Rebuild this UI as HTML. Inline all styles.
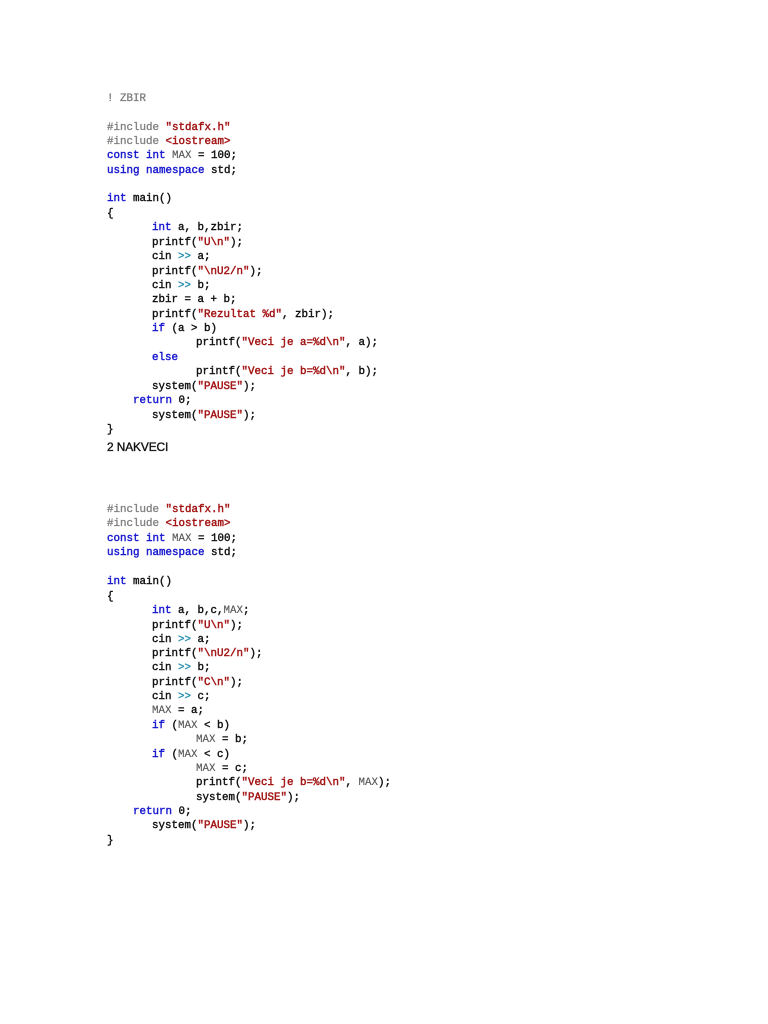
<!DOCTYPE html>
<html>
<head>
<meta charset="utf-8">
<style>
html,body{margin:0;padding:0;background:#fff;}
#p{position:relative;width:768px;height:1024px;overflow:hidden;background:#fff;filter:blur(0.35px);}
pre{position:absolute;margin:0;margin-top:1px;line-height:14px;font-family:"Liberation Mono",monospace;font-size:10.83px;color:#111;-webkit-text-stroke:0.4px #111;white-space:pre;}
.a{left:107px}.b{left:152px}.c{left:133px}.d{left:196px}
i{font-style:normal}
.k{color:#1a1ad0;-webkit-text-stroke:0.45px #1a1ad0}
.s{color:#a31515;-webkit-text-stroke:0.45px #a31515}
.g{color:#808080;-webkit-text-stroke:0.35px #808080}
.v{color:#555;-webkit-text-stroke:0.1px #555}
.t{color:#2b91af;-webkit-text-stroke:0.4px #2b91af}
#h{position:absolute;left:107px;top:439px;font:11.9px/16px "Liberation Sans",sans-serif;color:#111;-webkit-text-stroke:0.35px #111;letter-spacing:-0.1px}
</style>
</head>
<body>
<div id="p">
<pre class="a" style="top:91px"><i class="g">! ZBIR</i></pre>
<pre class="a" style="top:120px"><i class="g">#include</i> <i class="s">"stdafx.h"</i></pre>
<pre class="a" style="top:134px"><i class="g">#include</i> <i class="s">&lt;iostream&gt;</i></pre>
<pre class="a" style="top:148px"><i class="k">const</i> <i class="k">int</i> <i class="v">MAX</i> = 100;</pre>
<pre class="a" style="top:163px"><i class="k">using</i> <i class="k">namespace</i> std;</pre>
<pre class="a" style="top:191px"><i class="k">int</i> main()</pre>
<pre class="a" style="top:206px">{</pre>
<pre class="b" style="top:220px"><i class="k">int</i> a, b,zbir;</pre>
<pre class="b" style="top:235px">printf(<i class="s">"U\n"</i>);</pre>
<pre class="b" style="top:249px">cin <i class="t">&gt;&gt;</i> a;</pre>
<pre class="b" style="top:264px">printf(<i class="s">"\nU2/n"</i>);</pre>
<pre class="b" style="top:278px">cin <i class="t">&gt;&gt;</i> b;</pre>
<pre class="b" style="top:292px">zbir = a + b;</pre>
<pre class="b" style="top:307px">printf(<i class="s">"Rezultat %d"</i>, zbir);</pre>
<pre class="b" style="top:321px"><i class="k">if</i> (a &gt; b)</pre>
<pre class="d" style="top:335px">printf(<i class="s">"Veci je a=%d\n"</i>, a);</pre>
<pre class="b" style="top:350px"><i class="k">else</i></pre>
<pre class="d" style="top:364px">printf(<i class="s">"Veci je b=%d\n"</i>, b);</pre>
<pre class="b" style="top:379px">system(<i class="s">"PAUSE"</i>);</pre>
<pre class="c" style="top:393px"><i class="k">return</i> 0;</pre>
<pre class="b" style="top:408px">system(<i class="s">"PAUSE"</i>);</pre>
<pre class="a" style="top:422px">}</pre>
<div id="h">2 NAKVECI</div>
<pre class="a" style="top:502px"><i class="g">#include</i> <i class="s">"stdafx.h"</i></pre>
<pre class="a" style="top:516px"><i class="g">#include</i> <i class="s">&lt;iostream&gt;</i></pre>
<pre class="a" style="top:531px"><i class="k">const</i> <i class="k">int</i> <i class="v">MAX</i> = 100;</pre>
<pre class="a" style="top:545px"><i class="k">using</i> <i class="k">namespace</i> std;</pre>
<pre class="a" style="top:574px"><i class="k">int</i> main()</pre>
<pre class="a" style="top:589px">{</pre>
<pre class="b" style="top:603px"><i class="k">int</i> a, b,c,<i class="v">MAX</i>;</pre>
<pre class="b" style="top:618px">printf(<i class="s">"U\n"</i>);</pre>
<pre class="b" style="top:632px">cin <i class="t">&gt;&gt;</i> a;</pre>
<pre class="b" style="top:646px">printf(<i class="s">"\nU2/n"</i>);</pre>
<pre class="b" style="top:660px">cin <i class="t">&gt;&gt;</i> b;</pre>
<pre class="b" style="top:675px">printf(<i class="s">"C\n"</i>);</pre>
<pre class="b" style="top:689px">cin <i class="t">&gt;&gt;</i> c;</pre>
<pre class="b" style="top:703px"><i class="v">MAX</i> = a;</pre>
<pre class="b" style="top:718px"><i class="k">if</i> (<i class="v">MAX</i> &lt; b)</pre>
<pre class="d" style="top:732px"><i class="v">MAX</i> = b;</pre>
<pre class="b" style="top:747px"><i class="k">if</i> (<i class="v">MAX</i> &lt; c)</pre>
<pre class="d" style="top:761px"><i class="v">MAX</i> = c;</pre>
<pre class="d" style="top:775px">printf(<i class="s">"Veci je b=%d\n"</i>, <i class="v">MAX</i>);</pre>
<pre class="d" style="top:790px">system(<i class="s">"PAUSE"</i>);</pre>
<pre class="c" style="top:804px"><i class="k">return</i> 0;</pre>
<pre class="b" style="top:818px">system(<i class="s">"PAUSE"</i>);</pre>
<pre class="a" style="top:833px">}</pre>
</div>
</body>
</html>
